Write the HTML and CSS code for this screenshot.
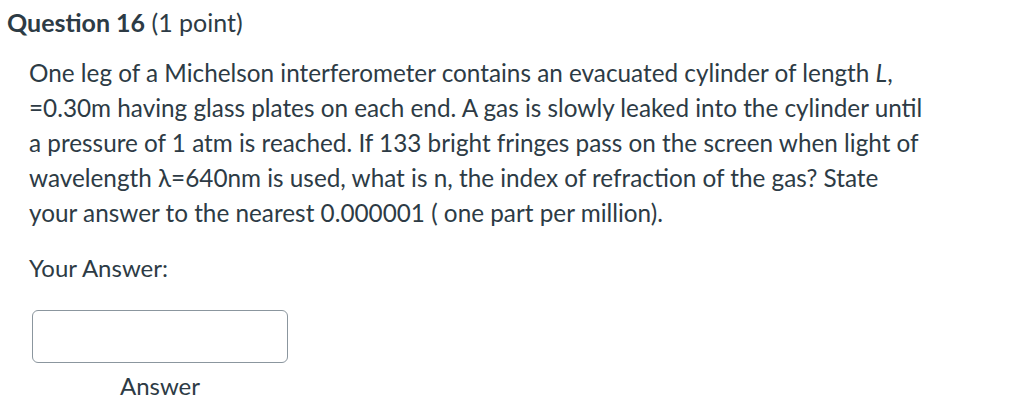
FILE: index.html
```html
<!DOCTYPE html>
<html lang="en">
  <head>
    <meta charset="UTF-8">
    <title>Question 16</title>
    <link rel="stylesheet" href="styles.css">
  </head>
  <body>
    <div class="question">
      <h2 class="question-title"><span class="question-name">Question 16</span> (1 point)</h2>
      <div class="question-body">
        <p class="question-text">One leg of a Michelson interferometer contains an evacuated cylinder of length <i>L</i>, =0.30m having glass plates on each end. A gas is slowly leaked into the cylinder until a pressure of 1 atm is reached. If 133 bright fringes pass on the screen when light of wavelength λ=640nm is used, what is n, the index of refraction of the gas? State your answer to the nearest 0.000001 ( one part per million).</p>
        <p class="answer-label">Your Answer:</p>
        <div class="answer-field">
          <input type="text" class="answer-input" aria-label="Answer">
          <span class="answer-caption">Answer</span>
        </div>
      </div>
    </div>
  </body>
</html>
```

FILE: styles.css
```css
* {
  box-sizing: border-box;
  margin: 0;
  padding: 0;
}

body {
  font-family: Lato, "Liberation Sans", sans-serif;
  color: #2d3b45;
  background: white;
}

.question {
  padding: 6px 7px;
}

.question-title {
  font-size: 25px;
  font-weight: normal;
  line-height: 32px;
}

.question-name {
  font-weight: bold;
}

.question-body {
  padding: 17px 22px 0;
}

.question-text {
  font-size: 24.3px;
  line-height: 35px;
  max-width: 898px;
}

.answer-label {
  font-size: 24px;
  line-height: 30px;
  margin-top: 23px;
}

.answer-field {
  display: flex;
  flex-direction: column;
  align-items: center;
  width: 256px;
  margin: 27px 0 0 3px;
}

.answer-input {
  width: 256px;
  height: 53px;
  border: 1px solid #8b969e;
  border-radius: 6px;
  font: inherit;
  padding: 0 12px;
}

.answer-caption {
  font-size: 24px;
  line-height: 30px;
  margin-top: 8px;
}
```
